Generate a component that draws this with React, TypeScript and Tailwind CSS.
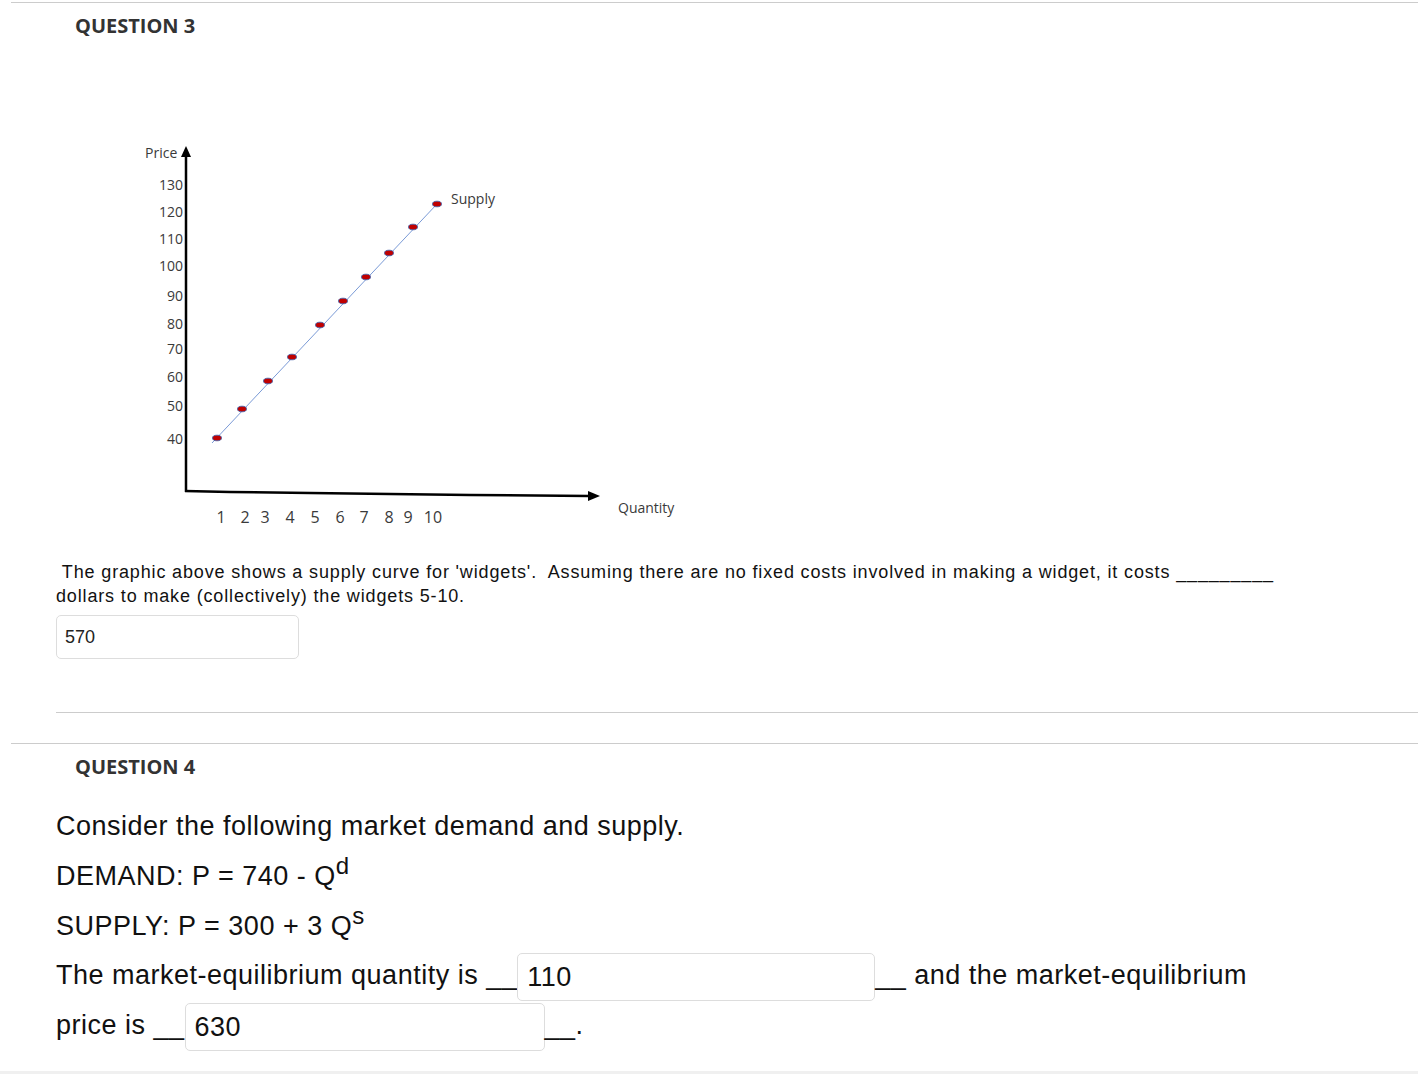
import React from "react";

const pts: [number, number][] = [
  [217, 438], [242, 409], [268, 381], [292, 357], [320, 325],
  [343, 301], [366, 277], [389, 253], [413, 227], [437, 204],
];
const yLabels: [string, number][] = [
  ["130", 185], ["120", 212], ["110", 239], ["100", 266], ["90", 296],
  ["80", 324], ["70", 349], ["60", 377], ["50", 406], ["40", 439],
];
const xLabels: [string, number][] = [
  ["1", 221], ["2", 245], ["3", 265], ["4", 290], ["5", 315],
  ["6", 340], ["7", 364], ["8", 389], ["9", 408], ["10", 433],
];

function Chart() {
  const ox = 130;
  const oy = 135;
  return (
    <svg width="600" height="400" viewBox={`${ox} ${oy} 600 400`} className="block">
      <g fontFamily="'Open Sans', 'Noto Sans', sans-serif" fill="#3a3a3a">
        <text x="145" y="158" fontSize="14">Price</text>
        {yLabels.map(([t, y]) => (
          <text key={t} x="183" y={y + 5} fontSize="14" textAnchor="end">{t}</text>
        ))}
        {xLabels.map(([t, x]) => (
          <text key={t} x={x} y={523} fontSize="16" textAnchor="middle">{t}</text>
        ))}
        <text x="451" y="204" fontSize="14">Supply</text>
        <text x="618" y="513" fontSize="14">Quantity</text>
      </g>
      <line x1="186" y1="155" x2="186" y2="492" stroke="#000" strokeWidth="2.5" />
      <polygon points="186,146 181,157 191,157" fill="#000" />
      <polyline points="185,491 230,492 310,493 390,494 470,495 589,496" fill="none" stroke="#000" strokeWidth="2.5" />
      <polygon points="600,496 588,491 588,501" fill="#000" />
      <line x1="212" y1="443" x2="437" y2="204" stroke="#7a9ad6" strokeWidth="1" />
      {pts.map(([x, y], i) => (
        <ellipse key={i} cx={x} cy={y} rx="4.5" ry="2.8" fill="#c00000" stroke="#3b5ca8" strokeWidth="0.8" />
      ))}
    </svg>
  );
}

export default function App() {
  return (
    <div className="w-[1418px] bg-white text-black" style={{ fontFamily: "'Liberation Sans', Arial, sans-serif" }}>
      {/* Question 3 */}
      <div className="ml-[11px] mt-[2px] border-t border-[#cccccc]">
        <div
          className="pl-[64px] pt-[9px] h-[37px] text-[20px] font-bold leading-[28px] text-[#333333]"
          style={{ fontFamily: "'Open Sans', 'Noto Sans', sans-serif" }}
        >
          QUESTION 3
        </div>
        <div className="ml-[119px] mt-[95px]">
          <Chart />
        </div>
        <div className="ml-[45px] mt-[25px] text-[18px] leading-[24px] text-[#111111]">
          <p className="tracking-[0.85px]">
            &nbsp;The graphic above shows a supply curve for 'widgets'.&nbsp; Assuming there are no fixed costs involved in making a widget, it costs _________
            <br />
            dollars to make (collectively) the widgets 5-10.
          </p>
          <div className="mt-[7px] w-[243px] h-[44px] border border-[#dddddd] rounded-[5px] flex items-center pl-[8px] text-[18px] text-[#222222]">
            570
          </div>
        </div>
        <div className="ml-[45px] mt-[53px] border-t border-[#cccccc]" />
      </div>
      {/* Question 4 */}
      <div className="ml-[11px] mt-[30px] border-t border-[#cccccc]">
        <div
          className="pl-[64px] pt-[9px] h-[37px] text-[20px] font-bold leading-[28px] text-[#333333]"
          style={{ fontFamily: "'Open Sans', 'Noto Sans', sans-serif" }}
        >
          QUESTION 4
        </div>
        <div className="ml-[45px] mt-[20px] text-[27px] tracking-[0.5px] text-[#111111]">
          <div className="leading-[50px] h-[50px]">Consider the following market demand and supply.</div>
          <div className="leading-[50px] h-[50px]">
            DEMAND: P = 740 - Q<span className="relative top-[-11px] text-[24px]">d</span>
          </div>
          <div className="leading-[50px] h-[50px]">
            SUPPLY: P = 300 + 3 Q<span className="relative top-[-11px] text-[24px]">s</span>
          </div>
          <div className="leading-[49px]">
            The market-equilibrium quantity is __
            <span className="inline-block align-middle w-[358px] h-[48px] border border-[#dddddd] rounded-[5px] pl-[9px] leading-[46px] text-[27px]">110</span>
            __ and the market-equilibrium
            <br />
            price is __
            <span className="inline-block align-middle w-[360px] h-[48px] border border-[#dddddd] rounded-[5px] pl-[9px] leading-[46px] text-[27px]">630</span>
            __.
          </div>
        </div>
      </div>
      <div className="mt-[20px] h-[4px] bg-[#f0f0f0]" />
    </div>
  );
}
